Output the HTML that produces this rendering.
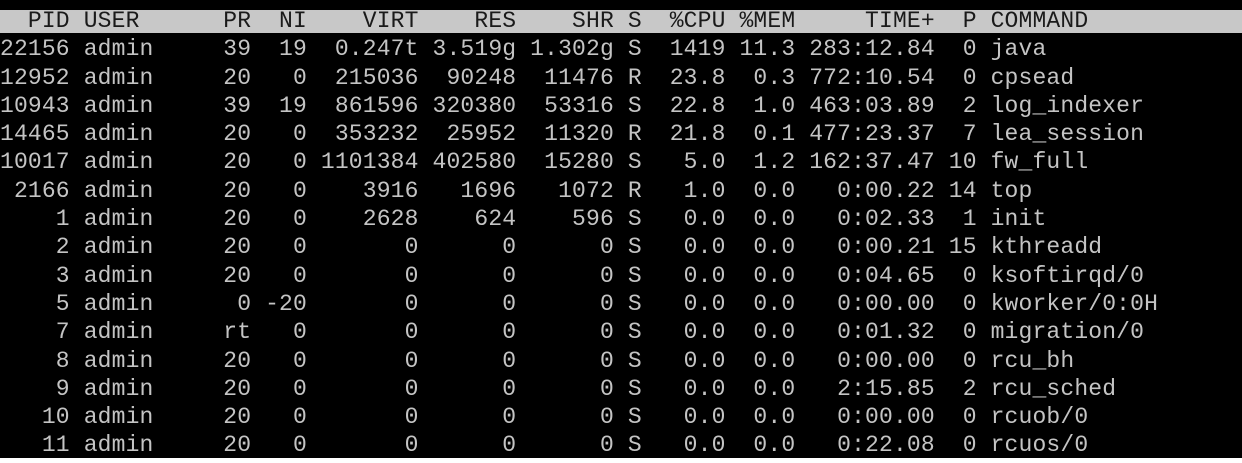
<!DOCTYPE html>
<html><head><meta charset="utf-8"><style>
html,body{margin:0;padding:0;background:#fff;width:1242px;height:463px;overflow:hidden}
#term{position:absolute;left:0;top:0;width:1242px;height:458px;background:#000}
#hdr{position:absolute;left:0;top:10px;width:1242px;height:23px;background:#c8c8c8}
pre{position:absolute;left:0;top:7px;margin:0;font-family:"Liberation Mono","Courier New",monospace;font-size:23px;letter-spacing:0.15px;line-height:28.3px;color:#c4c4c4;white-space:pre}
.h{color:#1a1a1a}
</style></head><body>
<div id="term"></div><div id="hdr"></div>
<pre><span class="h">  PID USER      PR  NI    VIRT    RES    SHR S  %CPU %MEM     TIME+  P COMMAND</span>
22156 admin     39  19  0.247t 3.519g 1.302g S  1419 11.3 283:12.84  0 java
12952 admin     20   0  215036  90248  11476 R  23.8  0.3 772:10.54  0 cpsead
10943 admin     39  19  861596 320380  53316 S  22.8  1.0 463:03.89  2 log_indexer
14465 admin     20   0  353232  25952  11320 R  21.8  0.1 477:23.37  7 lea_session
10017 admin     20   0 1101384 402580  15280 S   5.0  1.2 162:37.47 10 fw_full
 2166 admin     20   0    3916   1696   1072 R   1.0  0.0   0:00.22 14 top
    1 admin     20   0    2628    624    596 S   0.0  0.0   0:02.33  1 init
    2 admin     20   0       0      0      0 S   0.0  0.0   0:00.21 15 kthreadd
    3 admin     20   0       0      0      0 S   0.0  0.0   0:04.65  0 ksoftirqd/0
    5 admin      0 -20       0      0      0 S   0.0  0.0   0:00.00  0 kworker/0:0H
    7 admin     rt   0       0      0      0 S   0.0  0.0   0:01.32  0 migration/0
    8 admin     20   0       0      0      0 S   0.0  0.0   0:00.00  0 rcu_bh
    9 admin     20   0       0      0      0 S   0.0  0.0   2:15.85  2 rcu_sched
   10 admin     20   0       0      0      0 S   0.0  0.0   0:00.00  0 rcuob/0
   11 admin     20   0       0      0      0 S   0.0  0.0   0:22.08  0 rcuos/0</pre>
</body></html>
